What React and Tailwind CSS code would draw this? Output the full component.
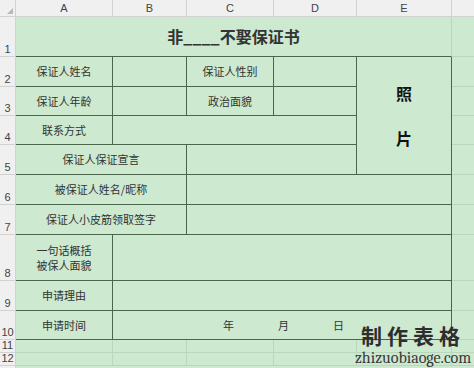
import React from 'react';

const Cell = ({ className = '', children }) => (
    <div className={`flex items-center justify-center text-center text-[11px] leading-[15px] text-[#333] ${className}`}>
        {children}
    </div>
);

const RowNum = ({ className = '', children }) => (
    <div className={`flex items-end justify-center bg-[#f0f0f0] border-r border-b border-[#d2d2d2] text-[11px] leading-[13px] text-[#444] font-['Liberation_Sans',sans-serif] ${className}`}>
        {children}
    </div>
);

const ColHead = ({ className = '', children }) => (
    <div className={`flex items-end justify-center pb-[1px] bg-[#f0f0f0] border-r border-b border-[#d2d2d2] text-[11px] leading-[13px] text-[#444] font-['Liberation_Sans',sans-serif] ${className}`}>
        {children}
    </div>
);

const App = () => {
    return (
        <div className="relative w-[474px] h-[368px] overflow-hidden bg-[#cde9d0] font-['Noto_Sans_CJK_SC','Liberation_Sans',sans-serif]">
            <div className="grid grid-cols-[16px_97px_74px_87px_83px_95px_22px] grid-rows-[17px_40px_30px_29px_29px_30px_30px_30px_46px_30px_29px_13px_13px_2px] w-full h-full">
                {/* column headers */}
                <div className="col-start-1 row-start-1 relative bg-[#f0f0f0] border-r border-b border-[#d2d2d2]">
                    <svg className="absolute right-[2px] bottom-[2px]" width="6" height="6" viewBox="0 0 6 6">
                        <polygon points="6,0 6,6 0,6" fill="#b8b8b8" />
                    </svg>
                </div>
                <ColHead className="col-start-2 row-start-1">A</ColHead>
                <ColHead className="col-start-3 row-start-1">B</ColHead>
                <ColHead className="col-start-4 row-start-1">C</ColHead>
                <ColHead className="col-start-5 row-start-1">D</ColHead>
                <ColHead className="col-start-6 row-start-1">E</ColHead>
                <ColHead className="col-start-7 row-start-1 border-r-0"></ColHead>

                {/* row numbers */}
                <RowNum className="col-start-1 row-start-2">1</RowNum>
                <RowNum className="col-start-1 row-start-3">2</RowNum>
                <RowNum className="col-start-1 row-start-4">3</RowNum>
                <RowNum className="col-start-1 row-start-5">4</RowNum>
                <RowNum className="col-start-1 row-start-6">5</RowNum>
                <RowNum className="col-start-1 row-start-7">6</RowNum>
                <RowNum className="col-start-1 row-start-8">7</RowNum>
                <RowNum className="col-start-1 row-start-9">8</RowNum>
                <RowNum className="col-start-1 row-start-10">9</RowNum>
                <RowNum className="col-start-1 row-start-11">10</RowNum>
                <RowNum className="col-start-1 row-start-12">11</RowNum>
                <RowNum className="col-start-1 row-start-13">12</RowNum>
                <RowNum className="col-start-1 row-start-14 border-b-0"></RowNum>

                {/* row 1: title */}
                <Cell className="col-start-2 col-span-5 row-start-2 border-b border-r border-b-[#4a674b] border-r-[#bcd5bd] text-[16px] font-bold text-[#111]">
                    非____不娶保证书
                </Cell>
                <div className="col-start-7 row-start-2 border-b border-[#bcd5bd]"></div>

                {/* row 2 */}
                <Cell className="col-start-2 row-start-3 border-r border-b border-[#4a674b]">保证人姓名</Cell>
                <Cell className="col-start-3 row-start-3 border-r border-b border-[#4a674b]"></Cell>
                <Cell className="col-start-4 row-start-3 border-r border-b border-[#4a674b]">保证人性别</Cell>
                <Cell className="col-start-5 row-start-3 border-r border-b border-[#4a674b]"></Cell>
                <div className="col-start-6 row-start-3 row-span-4 flex flex-col items-center justify-center gap-[29px] border-r border-b border-[#4a674b] text-[16px] leading-[16px] font-bold text-[#111]">
                    <span>照</span>
                    <span>片</span>
                </div>
                <div className="col-start-7 row-start-3 border-b border-[#bcd5bd]"></div>

                {/* row 3 */}
                <Cell className="col-start-2 row-start-4 border-r border-b border-[#4a674b]">保证人年龄</Cell>
                <Cell className="col-start-3 row-start-4 border-r border-b border-[#4a674b]"></Cell>
                <Cell className="col-start-4 row-start-4 border-r border-b border-[#4a674b]">政治面貌</Cell>
                <Cell className="col-start-5 row-start-4 border-r border-b border-[#4a674b]"></Cell>
                <div className="col-start-7 row-start-4 border-b border-[#bcd5bd]"></div>

                {/* row 4 */}
                <Cell className="col-start-2 row-start-5 border-r border-b border-[#4a674b]">联系方式</Cell>
                <Cell className="col-start-3 col-span-3 row-start-5 border-r border-b border-[#4a674b]"></Cell>
                <div className="col-start-7 row-start-5 border-b border-[#bcd5bd]"></div>

                {/* row 5 */}
                <Cell className="col-start-2 col-span-2 row-start-6 border-r border-b border-[#4a674b]">保证人保证宣言</Cell>
                <Cell className="col-start-4 col-span-2 row-start-6 border-r border-b border-[#4a674b]"></Cell>
                <div className="col-start-7 row-start-6 border-b border-[#bcd5bd]"></div>

                {/* row 6 */}
                <Cell className="col-start-2 col-span-2 row-start-7 border-r border-b border-[#4a674b]">被保证人姓名/昵称</Cell>
                <Cell className="col-start-4 col-span-3 row-start-7 border-r border-b border-[#4a674b]"></Cell>
                <div className="col-start-7 row-start-7 border-b border-[#bcd5bd]"></div>

                {/* row 7 */}
                <Cell className="col-start-2 col-span-2 row-start-8 border-r border-b border-[#4a674b]">保证人小皮筋领取签字</Cell>
                <Cell className="col-start-4 col-span-3 row-start-8 border-r border-b border-[#4a674b]"></Cell>
                <div className="col-start-7 row-start-8 border-b border-[#bcd5bd]"></div>

                {/* row 8 */}
                <Cell className="col-start-2 row-start-9 flex-col border-r border-b border-[#4a674b]">
                    <span>一句话概括</span>
                    <span>被保人面貌</span>
                </Cell>
                <Cell className="col-start-3 col-span-4 row-start-9 border-r border-b border-[#4a674b]"></Cell>
                <div className="col-start-7 row-start-9 border-b border-[#bcd5bd]"></div>

                {/* row 9 */}
                <Cell className="col-start-2 row-start-10 border-r border-b border-[#4a674b]">申请理由</Cell>
                <Cell className="col-start-3 col-span-4 row-start-10 border-r border-b border-[#4a674b]"></Cell>
                <div className="col-start-7 row-start-10 border-b border-[#bcd5bd]"></div>

                {/* row 10 */}
                <Cell className="col-start-2 row-start-11 border-r border-b border-[#4a674b]">申请时间</Cell>
                <Cell className="col-start-3 col-span-4 row-start-11 justify-start gap-[44px] pl-[110px] border-r border-b border-[#4a674b]">
                    <span>年</span>
                    <span>月</span>
                    <span>日</span>
                </Cell>
                <div className="col-start-7 row-start-11 border-b border-[#bcd5bd]"></div>

                {/* rows 11-12, empty grid */}
                <div className="col-start-2 row-start-12 border-r border-b border-[#bcd5bd]"></div>
                <div className="col-start-3 row-start-12 border-r border-b border-[#bcd5bd]"></div>
                <div className="col-start-4 row-start-12 border-r border-b border-[#bcd5bd]"></div>
                <div className="col-start-5 row-start-12 border-r border-b border-[#bcd5bd]"></div>
                <div className="col-start-6 row-start-12 border-r border-b border-[#bcd5bd]"></div>
                <div className="col-start-7 row-start-12 border-b border-[#bcd5bd]"></div>
                <div className="col-start-2 row-start-13 border-r border-b border-[#bcd5bd]"></div>
                <div className="col-start-3 row-start-13 border-r border-b border-[#bcd5bd]"></div>
                <div className="col-start-4 row-start-13 border-r border-b border-[#bcd5bd]"></div>
                <div className="col-start-5 row-start-13 border-r border-b border-[#bcd5bd]"></div>
                <div className="col-start-6 row-start-13 border-r border-b border-[#bcd5bd]"></div>
                <div className="col-start-7 row-start-13 border-b border-[#bcd5bd]"></div>
            </div>

            {/* watermark */}
            <div className="absolute left-[361px] top-[324px] text-[21px] leading-[22px] font-bold tracking-[5px] text-[#2e2e2e]">制作表格</div>
            <div className="absolute left-[355px] top-[350px] text-[16px] leading-[16px] text-[#3a3a3a] font-serif">zhizuobiaoge.com</div>
        </div>
    );
};

export default App;
